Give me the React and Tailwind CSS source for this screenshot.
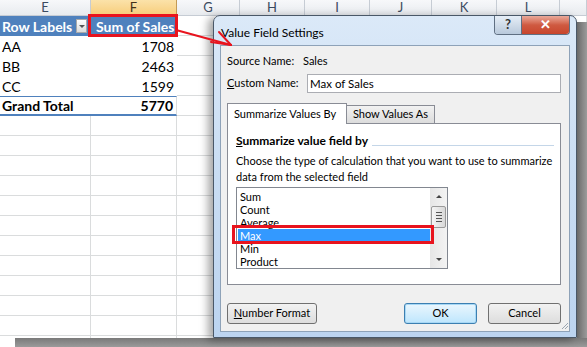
import React from 'react';

const cols = ['E', 'F', 'G', 'H', 'I', 'J', 'K', 'L', ''];
const gridCols = 'grid grid-cols-[91px_86px_63px_65px_65px_62px_65px_63px_1fr]';

const pivotRows = [
	{ label: 'AA', value: '1708' },
	{ label: 'BB', value: '2463' },
	{ label: 'CC', value: '1599' },
];

const items = ['Sum', 'Count', 'Average', 'Max', 'Min', 'Product'];

function EmptyCells({ from = 2 }) {
	return cols.slice(from).map((c, i) => (
		<div key={i} className="h-[20px] border-r border-b border-[#dadcdd]" />
	));
}

function Sheet() {
	return (
		<div className="w-[587px] h-[347px] overflow-hidden bg-white" style={{ fontFamily: 'Lato, "Liberation Sans", sans-serif' }}>
			{/* column headers */}
			<div className={gridCols}>
				{cols.map((c, i) => (
					<div
						key={i}
						className={`h-[16px] flex items-center justify-center text-[13px] border-r border-b ${
							c === 'F'
								? 'bg-gradient-to-b from-[#fbe2a9] to-[#f7cd7a] border-[#c29a55] text-[#43311a]'
								: 'bg-gradient-to-b from-[#f7f8fa] to-[#e8ebef] border-[#c6ccd4] text-[#3b4a5f]'
						}`}
					>
						{c}
					</div>
				))}
			</div>

			{/* pivot header */}
			<div className={gridCols}>
				<div className="h-[20px] bg-[#4f81bd] text-white font-bold text-[14px] flex items-center justify-between pl-[2px] pr-[4px]">
					<span>Row Labels</span>
					<span className="w-[11px] h-[14px] bg-gradient-to-b from-white to-[#dcdcdc] border border-[#a9a9a9] flex items-center justify-center">
						<span className="w-0 h-0 border-l-[3px] border-r-[3px] border-t-[3px] border-l-transparent border-r-transparent border-t-[#555]" />
					</span>
				</div>
				<div className="h-[20px] bg-[#4f81bd] text-white font-bold text-[14px] flex items-center pl-[5px]">Sum of Sales</div>
				<EmptyCells />
			</div>

			{pivotRows.map((r) => (
				<div key={r.label} className={gridCols}>
					<div className="h-[20px] text-[14px] text-black flex items-center pl-[2px]">{r.label}</div>
					<div className="h-[20px] text-[14px] text-black flex items-center justify-end pr-[3px]">{r.value}</div>
					<EmptyCells />
				</div>
			))}

			<div className={gridCols}>
				<div className="h-[20px] text-[14px] font-bold text-black flex items-center pl-[2px] border-t border-b-2 border-[#4f81bd]">Grand Total</div>
				<div className="h-[20px] text-[14px] font-bold text-black flex items-center justify-end pr-[3px] border-t border-b-2 border-[#4f81bd] border-r border-r-[#dadcdd]">5770</div>
				<EmptyCells />
			</div>

			{Array.from({ length: 12 }).map((_, i) => (
				<div key={i} className={gridCols}>
					<EmptyCells from={0} />
				</div>
			))}
		</div>
	);
}

function Dialog() {
	return (
		<div
			className="absolute left-[213px] top-[15px] w-[364px] h-[323px] rounded-t-[7px] border border-[#4a5868] bg-gradient-to-b from-[#dbe9f8] via-[#c9ddf3] to-[#bcd4f0] shadow-[-5px_2px_8px_rgba(0,0,0,0.35)] flex flex-col"
			style={{ fontFamily: 'Lato, "Liberation Sans", sans-serif' }}
		>
			{/* title bar */}
			<div className="h-[29px] flex items-start justify-between pl-[7px] pr-[6px]">
				<span className="mt-[8px] text-[12px] text-black">Value Field Settings</span>
				<div className="flex border border-t-0 border-[#5f6f82] rounded-b-[4px] overflow-hidden h-[19px]">
					<div className="w-[27px] bg-gradient-to-b from-[#e6eef7] to-[#b9c9db] flex items-center justify-center text-[13px] font-bold text-[#333] border-r border-[#5f6f82]">?</div>
					<div className="w-[47px] bg-gradient-to-b from-[#e9a99a] via-[#cf5a41] to-[#c8452c] flex items-center justify-center text-white text-[13px] font-bold">✕</div>
				</div>
			</div>

			{/* content */}
			<div className="mx-[6px] mb-[5px] flex-1 bg-[#f0f0f0] border border-[#8ea2b8] flex flex-col pl-[6px] pr-[8px] text-[11px] text-black">
				<div className="mt-[8px] h-[14px] flex items-center">
					<span className="w-[76px]">Source Name:</span>
					<span>Sales</span>
				</div>
				<div className="mt-[6px] h-[19px] flex items-center">
					<span className="w-[80px]"><u>C</u>ustom Name:</span>
					<div className="flex-1 h-[19px] bg-white border border-[#abadb3] flex items-center pl-[2px] text-[11.5px]">Max of Sales</div>
				</div>

				{/* tabs */}
				<div className="mt-[10px] flex items-end h-[21px] relative z-10">
					<div className="h-[21px] w-[120px] bg-white border border-b-0 border-[#898c95] flex items-center pl-[6px]">Summarize Values By</div>
					<div className="h-[19px] w-[88px] bg-gradient-to-b from-[#f2f2f2] to-[#dcdcdc] border border-l-0 border-[#898c95] flex items-center justify-center">Show Values As</div>
				</div>
				<div className="h-[162px] -mt-[1px] bg-white border border-[#898c95] pl-[8px] pr-[6px] flex flex-col">
					<div className="mt-[10px] flex items-end gap-[4px]">
						<span className="font-bold text-[12px] leading-[14px] whitespace-nowrap"><u>S</u>ummarize value field by</span>
						<span className="flex-1 h-px bg-[#c4d6e8] mb-[2px]" />
					</div>
					<div className="mt-[5px] leading-[16px] whitespace-nowrap">
						Choose the type of calculation that you want to use to summarize
						<br />
						data from the selected field
					</div>
					<div className="mt-[2px] w-[212px] h-[82px] border border-[#828790] bg-white flex relative">
						<div className="flex-1 pt-[2px] pl-[1px]">
							{items.map((it) => (
								<div
									key={it}
									className={`h-[13px] leading-[13px] pl-[2px] ${it === 'Max' ? 'bg-[#3399ff] text-white' : ''}`}
								>
									{it}
								</div>
							))}
						</div>
						<div className="w-[17px] bg-gradient-to-r from-[#e6e6e6] to-[#f3f3f3] flex flex-col items-center">
							<div className="h-[17px] flex items-center justify-center">
								<span className="w-0 h-0 border-l-[3px] border-r-[3px] border-b-[3px] border-l-transparent border-r-transparent border-b-[#444]" />
							</div>
							<div className="mt-[1px] w-[15px] h-[22px] rounded-[2px] border border-[#9a9a9a] bg-gradient-to-r from-[#f5f5f5] to-[#d8d8d8] flex flex-col items-center justify-center gap-[2px]">
								<span className="w-[6px] h-px bg-[#555]" />
								<span className="w-[6px] h-px bg-[#555]" />
								<span className="w-[6px] h-px bg-[#555]" />
								<span className="w-[6px] h-px bg-[#555]" />
							</div>
							<div className="flex-1" />
							<div className="h-[17px] flex items-center justify-center">
								<span className="w-0 h-0 border-l-[3px] border-r-[3px] border-t-[3px] border-l-transparent border-r-transparent border-t-[#444]" />
							</div>
						</div>
						{/* highlight marker */}
						<div className="absolute left-[-5px] top-[37px] w-[202px] h-[19px] border-[3px] border-[#e8141e]" />
					</div>
				</div>

				{/* buttons */}
				<div className="mt-[18px] flex items-center">
					<button className="w-[90px] h-[21px] rounded-[3px] border border-[#707070] bg-gradient-to-b from-[#f2f2f2] to-[#dddddd]"><u>N</u>umber Format</button>
					<div className="flex-1" />
					<button className="w-[73px] h-[21px] rounded-[3px] border border-[#3c7fb1] bg-gradient-to-b from-[#eaf6fd] to-[#bee6fd] shadow-[inset_0_0_0_1px_#a8d8f5]">OK</button>
					<button className="ml-[11px] w-[73px] h-[21px] rounded-[3px] border border-[#707070] bg-gradient-to-b from-[#f2f2f2] to-[#dddddd]">Cancel</button>
				</div>
			</div>

			{/* resize grip */}
			<svg className="absolute right-[7px] bottom-[7px]" width="9" height="9" viewBox="0 0 9 9">
				<path d="M8 2 L2 8 M8 5 L5 8" stroke="#9aa5b1" strokeWidth="1" />
			</svg>
		</div>
	);
}

export default function App() {
	return (
		<div className="relative w-[587px] h-[347px] overflow-hidden">
			<Sheet />

			{/* red marker around Sum of Sales */}
			<div className="absolute left-[88px] top-[14px] w-[90px] h-[23px] border-[3px] border-[#e8141e]" />

			{/* window shadows */}
			<div className="absolute right-0 top-[22px] w-[10px] h-[325px] bg-gradient-to-r from-[#6d6d6d] to-[#9b9b9b]" />
			<div className="absolute left-[15px] bottom-0 w-[572px] h-[9px] bg-gradient-to-b from-[#7a7a7a] to-[#9a9a9a]" />

			<Dialog />

			{/* arrow */}
			<svg className="absolute left-0 top-0 pointer-events-none" width="587" height="347">
				<g stroke="#e8141e" strokeWidth="2" strokeLinecap="round" fill="none">
					<path d="M176 30 L231 45" />
					<path d="M219 32 L231 45" />
					<path d="M211 42 L231 45" />
				</g>
			</svg>
		</div>
	);
}
